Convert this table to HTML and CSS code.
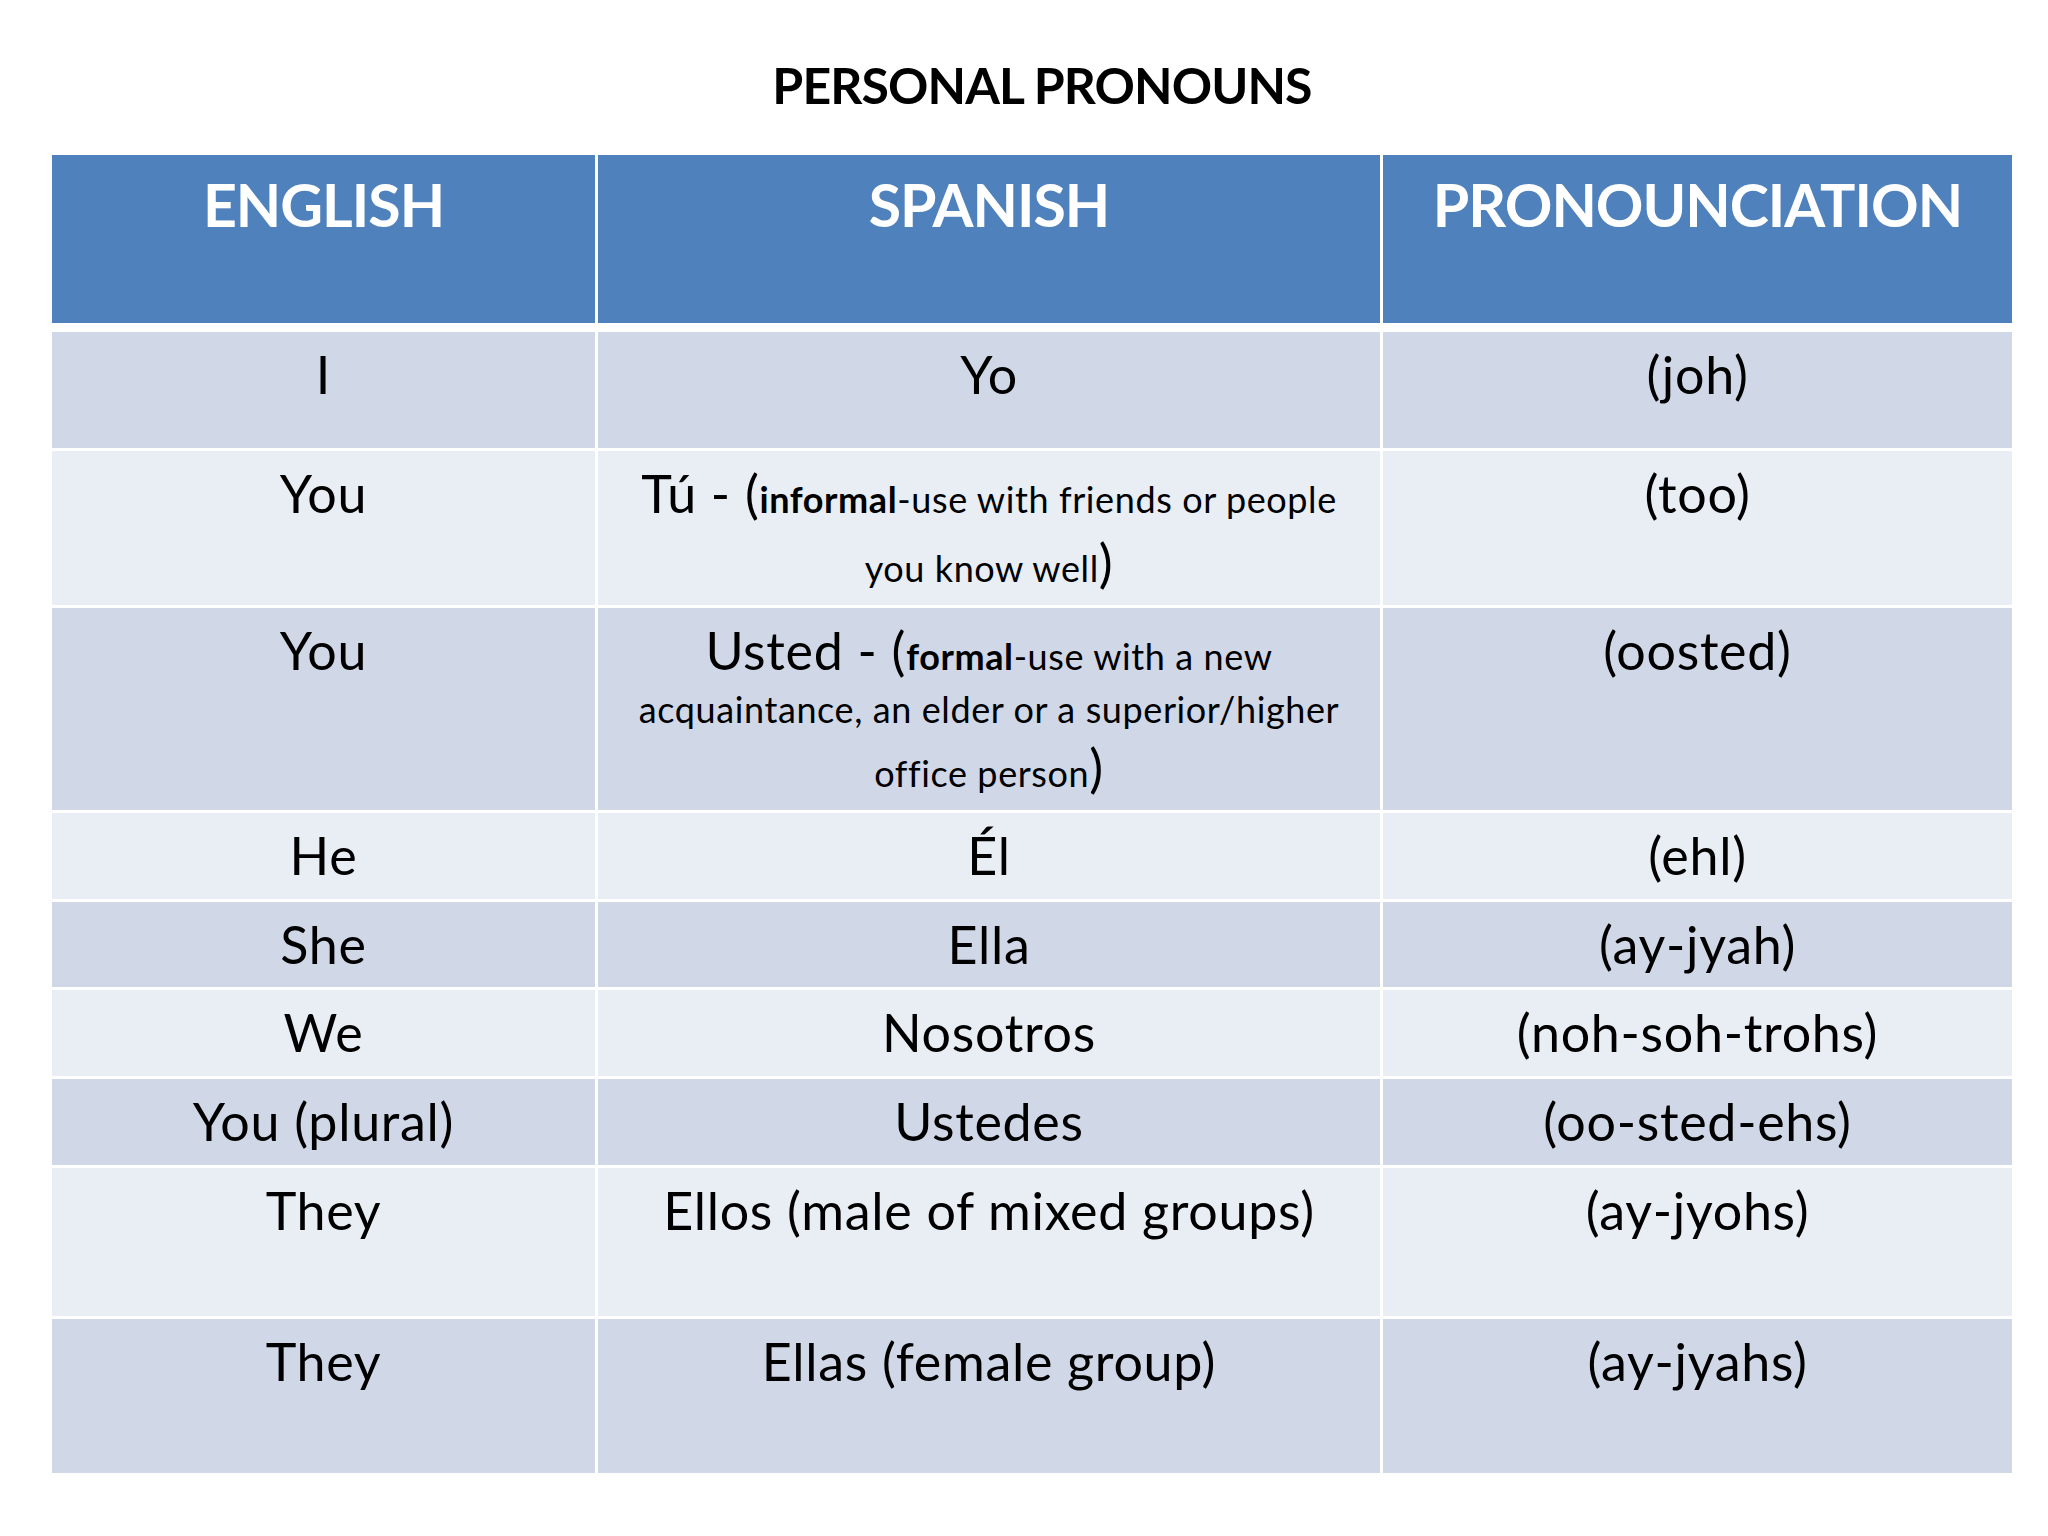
FILE: index.html
```html
<!DOCTYPE html>
<html lang="en">
<head>
<meta charset="utf-8">
<title>Personal Pronouns</title>
<link rel="stylesheet" href="styles.css">
</head>
<body>
<h1 class="title">PERSONAL PRONOUNS</h1>
<div class="table">
  <div class="cell head">ENGLISH</div>
  <div class="cell head">SPANISH</div>
  <div class="cell head">PRONOUNCIATION</div>

  <div class="cell dark">I</div>
  <div class="cell dark">Yo</div>
  <div class="cell dark">(joh)</div>

  <div class="cell light">You</div>
  <div class="cell light">
    <div class="ln r2a">Tú - (<b class="sm">informal</b><span class="sm">-use with friends or people</span></div>
    <div class="ln r2b"><span class="sm">you know well</span>)</div>
  </div>
  <div class="cell light">(too)</div>

  <div class="cell dark">You</div>
  <div class="cell dark">
    <div class="ln r3a">Usted - (<b class="sm">formal</b><span class="sm">-use with a new</span></div>
    <div class="ln r3b">acquaintance, an elder or a superior/higher</div>
    <div class="ln r3c"><span class="sm">office person</span>)</div>
  </div>
  <div class="cell dark">(oosted)</div>

  <div class="cell light">He</div>
  <div class="cell light">Él</div>
  <div class="cell light">(ehl)</div>

  <div class="cell dark">She</div>
  <div class="cell dark">Ella</div>
  <div class="cell dark">(ay-jyah)</div>

  <div class="cell light">We</div>
  <div class="cell light">Nosotros</div>
  <div class="cell light">(noh-soh-trohs)</div>

  <div class="cell dark">You (plural)</div>
  <div class="cell dark">Ustedes</div>
  <div class="cell dark">(oo-sted-ehs)</div>

  <div class="cell light">They</div>
  <div class="cell light">Ellos (male of mixed groups)</div>
  <div class="cell light">(ay-jyohs)</div>

  <div class="cell dark">They</div>
  <div class="cell dark">Ellas (female group)</div>
  <div class="cell dark">(ay-jyahs)</div>
</div>
</body>
</html>
```

FILE: styles.css
```css
html, body {
  margin: 0;
  padding: 0;
  background: #ffffff;
}

body {
  width: 2048px;
  height: 1536px;
  font-family: Lato, "Open Sans", sans-serif;
  color: #000000;
  overflow: hidden;
}

.title {
  margin: 0;
  padding: 55px 0 0 36px;
  height: 60px;
  font-size: 50px;
  line-height: 60px;
  font-weight: 700;
  letter-spacing: -0.9px;
  text-align: center;
}

.table {
  margin: 40px 0 0 52px;
  width: 1960px;
  display: grid;
  grid-template-columns: 543px 782px 629px;
  grid-template-rows: 174px 116px 154px 202px 86px 85px 86px 86px 148px 154px;
  column-gap: 3px;
  row-gap: 3px;
  background: #ffffff;
}

.cell {
  text-align: center;
  font-size: 52px;
  line-height: 62.4px;
  letter-spacing: 0.7px;
  padding-top: 11px;
  box-sizing: border-box;
}

.head {
  background: #4f81bd;
  color: #ffffff;
  font-weight: 700;
  font-size: 59px;
  line-height: 70.8px;
  letter-spacing: -1px;
  padding-top: 15px;
  margin-bottom: 6px;
}

.dark {
  background: #d0d8e8;
}

.light {
  background: #e9edf4;
}

.sm {
  font-size: 36px;
  line-height: 43.2px;
  letter-spacing: 0.6px;
}

.ln {
  white-space: nowrap;
}

.r2a { line-height: 62.4px; }
.r2b { line-height: 77px; }
.r3a { line-height: 62.4px; }
.r3b { font-size: 36px; line-height: 57.4px; letter-spacing: 0.6px; }
.r3c { line-height: 56px; }
```
